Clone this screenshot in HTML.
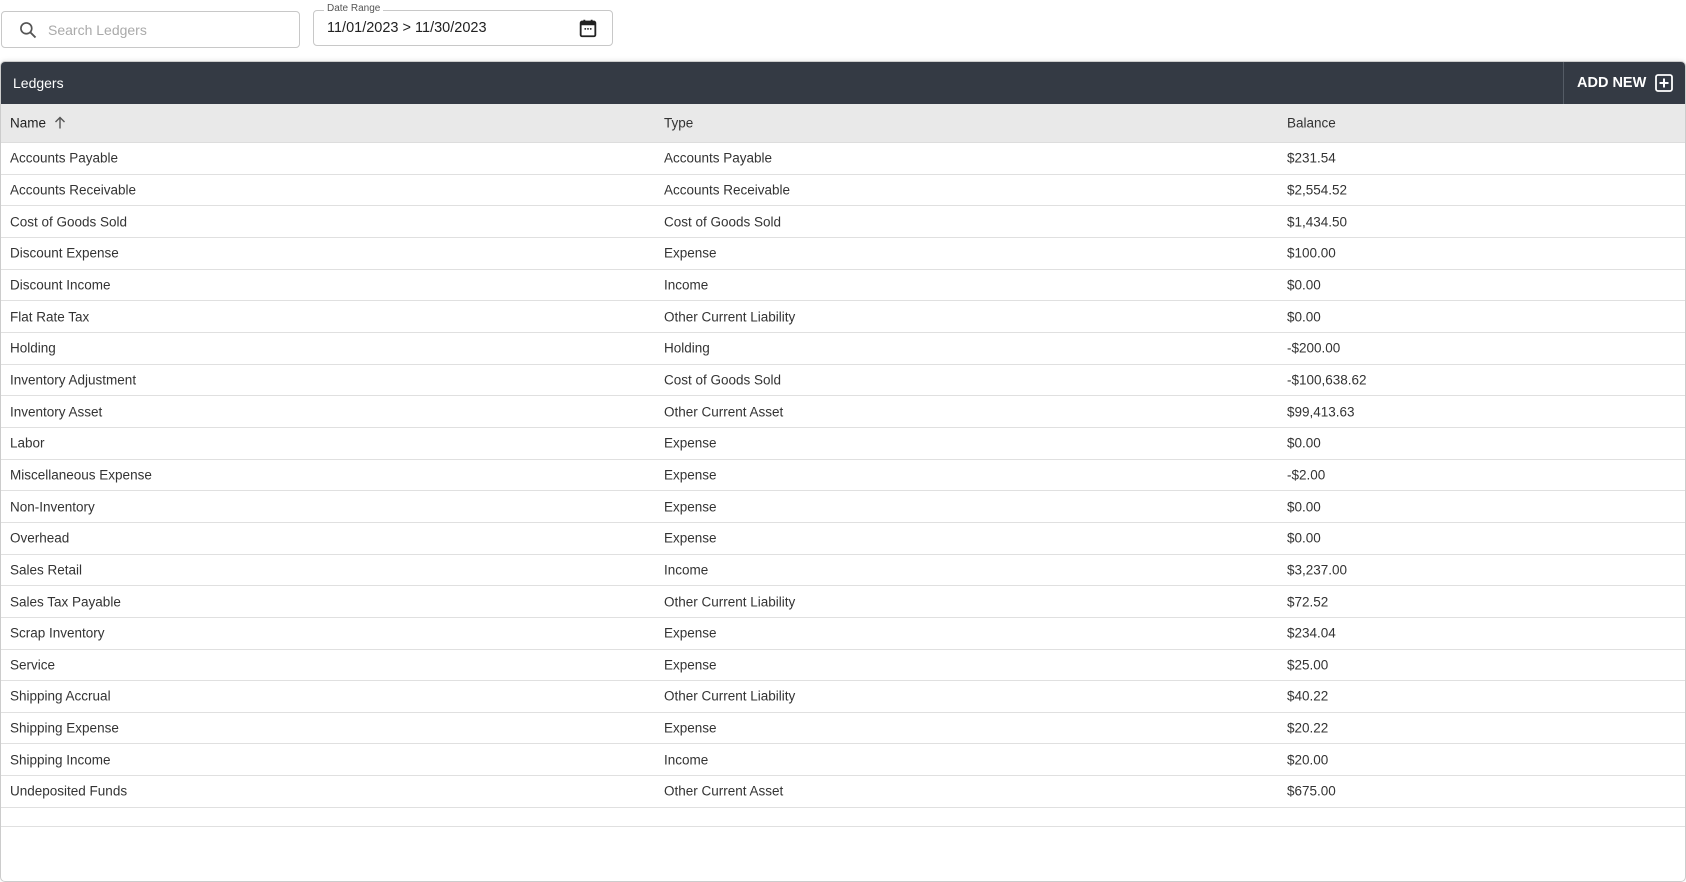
<!DOCTYPE html>
<html><head><style>
*{box-sizing:border-box;margin:0;padding:0}
body{width:1686px;height:882px;background:#fff;font-family:"Liberation Sans",sans-serif;color:#222;position:relative;overflow:hidden}
.search{position:absolute;left:1px;top:11px;width:299px;height:37px;border:1px solid #c8c8c8;border-radius:4px}
.search span{position:absolute;left:46px;top:10px;font-size:14px;color:#aaa}
.date{position:absolute;left:313px;top:10px;width:300px;height:36px;border:1px solid #c8c8c8;border-radius:4px}
.date .lbl{position:absolute;left:10px;top:-8px;background:#fff;padding:0 3px;font-size:10px;color:#555}
.date .val{position:absolute;left:13px;top:9px;font-size:14.5px;color:#222}
.card{position:absolute;left:0;top:61px;width:1686px;height:821px;border:1px solid #ccc;border-radius:5px;overflow:hidden;box-shadow:0 -1px 4px rgba(0,0,0,.08)}
.bar{height:42px;background:#343a44;color:#fff;position:relative}
.bar .t{position:absolute;left:12px;top:13px;font-size:14px}
.bar .add{position:absolute;left:1562px;top:0;height:42px;width:124px;border-left:1px solid #555c66}
.bar .add span{position:absolute;left:13px;top:13px;font-size:14.5px;font-weight:bold}
.hdr{height:39px;background:#e9e9e9;border-bottom:1px solid #ddd;position:relative;font-size:13.5px;color:#333}
.row{height:31.67px;border-bottom:1px solid #e0e0e0;position:relative;font-size:13.5px;color:#333}
.c{position:absolute;top:50%;transform:translateY(-50%)}
.a{left:9px}.b{left:663px}.d{left:1286px}
</style></head><body>
<div class="search">
<svg style="position:absolute;left:16px;top:8px" width="20" height="20" viewBox="0 0 24 24"><circle cx="10" cy="10" r="6.5" fill="none" stroke="#555" stroke-width="2"/><path d="M15 15l6 6" stroke="#555" stroke-width="2.3"/></svg>
<span>Search Ledgers</span></div>
<div class="date"><span class="lbl">Date Range</span><span class="val">11/01/2023 &gt; 11/30/2023</span>
<svg style="position:absolute;left:263px;top:6px" width="22" height="22" viewBox="0 0 24 24"><rect x="4" y="5" width="16" height="16" rx="1.5" fill="none" stroke="#222" stroke-width="2"/><rect x="4" y="5" width="16" height="4" fill="#222"/><path d="M8 3v4M16 3v4" stroke="#222" stroke-width="2"/><circle cx="9" cy="13" r="1" fill="#222"/><circle cx="12" cy="13" r="1" fill="#222"/><circle cx="15" cy="13" r="1" fill="#222"/></svg></div>
<div class="card">
<div class="bar"><span class="t">Ledgers</span><div class="add"><span>ADD NEW</span>
<svg style="position:absolute;left:91px;top:12px" width="18" height="18" viewBox="0 0 18 18"><rect x="1" y="1" width="16" height="16" rx="2" fill="none" stroke="#fff" stroke-width="1.8"/><path d="M9 4.5v9M4.5 9h9" stroke="#fff" stroke-width="2"/></svg></div></div>
<div class="hdr"><span class="c a" style="color:#222">Name <svg width="14" height="14" viewBox="0 0 14 14" style="vertical-align:-2px;margin-left:3px"><path d="M7 13V2M2.5 6.5L7 2l4.5 4.5" fill="none" stroke="#555" stroke-width="1.4"/></svg></span><span class="c b">Type</span><span class="c d">Balance</span></div>
<div class="row"><span class="c a">Accounts Payable</span><span class="c b">Accounts Payable</span><span class="c d">$231.54</span></div>
<div class="row"><span class="c a">Accounts Receivable</span><span class="c b">Accounts Receivable</span><span class="c d">$2,554.52</span></div>
<div class="row"><span class="c a">Cost of Goods Sold</span><span class="c b">Cost of Goods Sold</span><span class="c d">$1,434.50</span></div>
<div class="row"><span class="c a">Discount Expense</span><span class="c b">Expense</span><span class="c d">$100.00</span></div>
<div class="row"><span class="c a">Discount Income</span><span class="c b">Income</span><span class="c d">$0.00</span></div>
<div class="row"><span class="c a">Flat Rate Tax</span><span class="c b">Other Current Liability</span><span class="c d">$0.00</span></div>
<div class="row"><span class="c a">Holding</span><span class="c b">Holding</span><span class="c d">-$200.00</span></div>
<div class="row"><span class="c a">Inventory Adjustment</span><span class="c b">Cost of Goods Sold</span><span class="c d">-$100,638.62</span></div>
<div class="row"><span class="c a">Inventory Asset</span><span class="c b">Other Current Asset</span><span class="c d">$99,413.63</span></div>
<div class="row"><span class="c a">Labor</span><span class="c b">Expense</span><span class="c d">$0.00</span></div>
<div class="row"><span class="c a">Miscellaneous Expense</span><span class="c b">Expense</span><span class="c d">-$2.00</span></div>
<div class="row"><span class="c a">Non-Inventory</span><span class="c b">Expense</span><span class="c d">$0.00</span></div>
<div class="row"><span class="c a">Overhead</span><span class="c b">Expense</span><span class="c d">$0.00</span></div>
<div class="row"><span class="c a">Sales Retail</span><span class="c b">Income</span><span class="c d">$3,237.00</span></div>
<div class="row"><span class="c a">Sales Tax Payable</span><span class="c b">Other Current Liability</span><span class="c d">$72.52</span></div>
<div class="row"><span class="c a">Scrap Inventory</span><span class="c b">Expense</span><span class="c d">$234.04</span></div>
<div class="row"><span class="c a">Service</span><span class="c b">Expense</span><span class="c d">$25.00</span></div>
<div class="row"><span class="c a">Shipping Accrual</span><span class="c b">Other Current Liability</span><span class="c d">$40.22</span></div>
<div class="row"><span class="c a">Shipping Expense</span><span class="c b">Expense</span><span class="c d">$20.22</span></div>
<div class="row"><span class="c a">Shipping Income</span><span class="c b">Income</span><span class="c d">$20.00</span></div>
<div class="row"><span class="c a">Undeposited Funds</span><span class="c b">Other Current Asset</span><span class="c d">$675.00</span></div>
<div class="row" style="height:19px"></div>
</div>
</body></html>
